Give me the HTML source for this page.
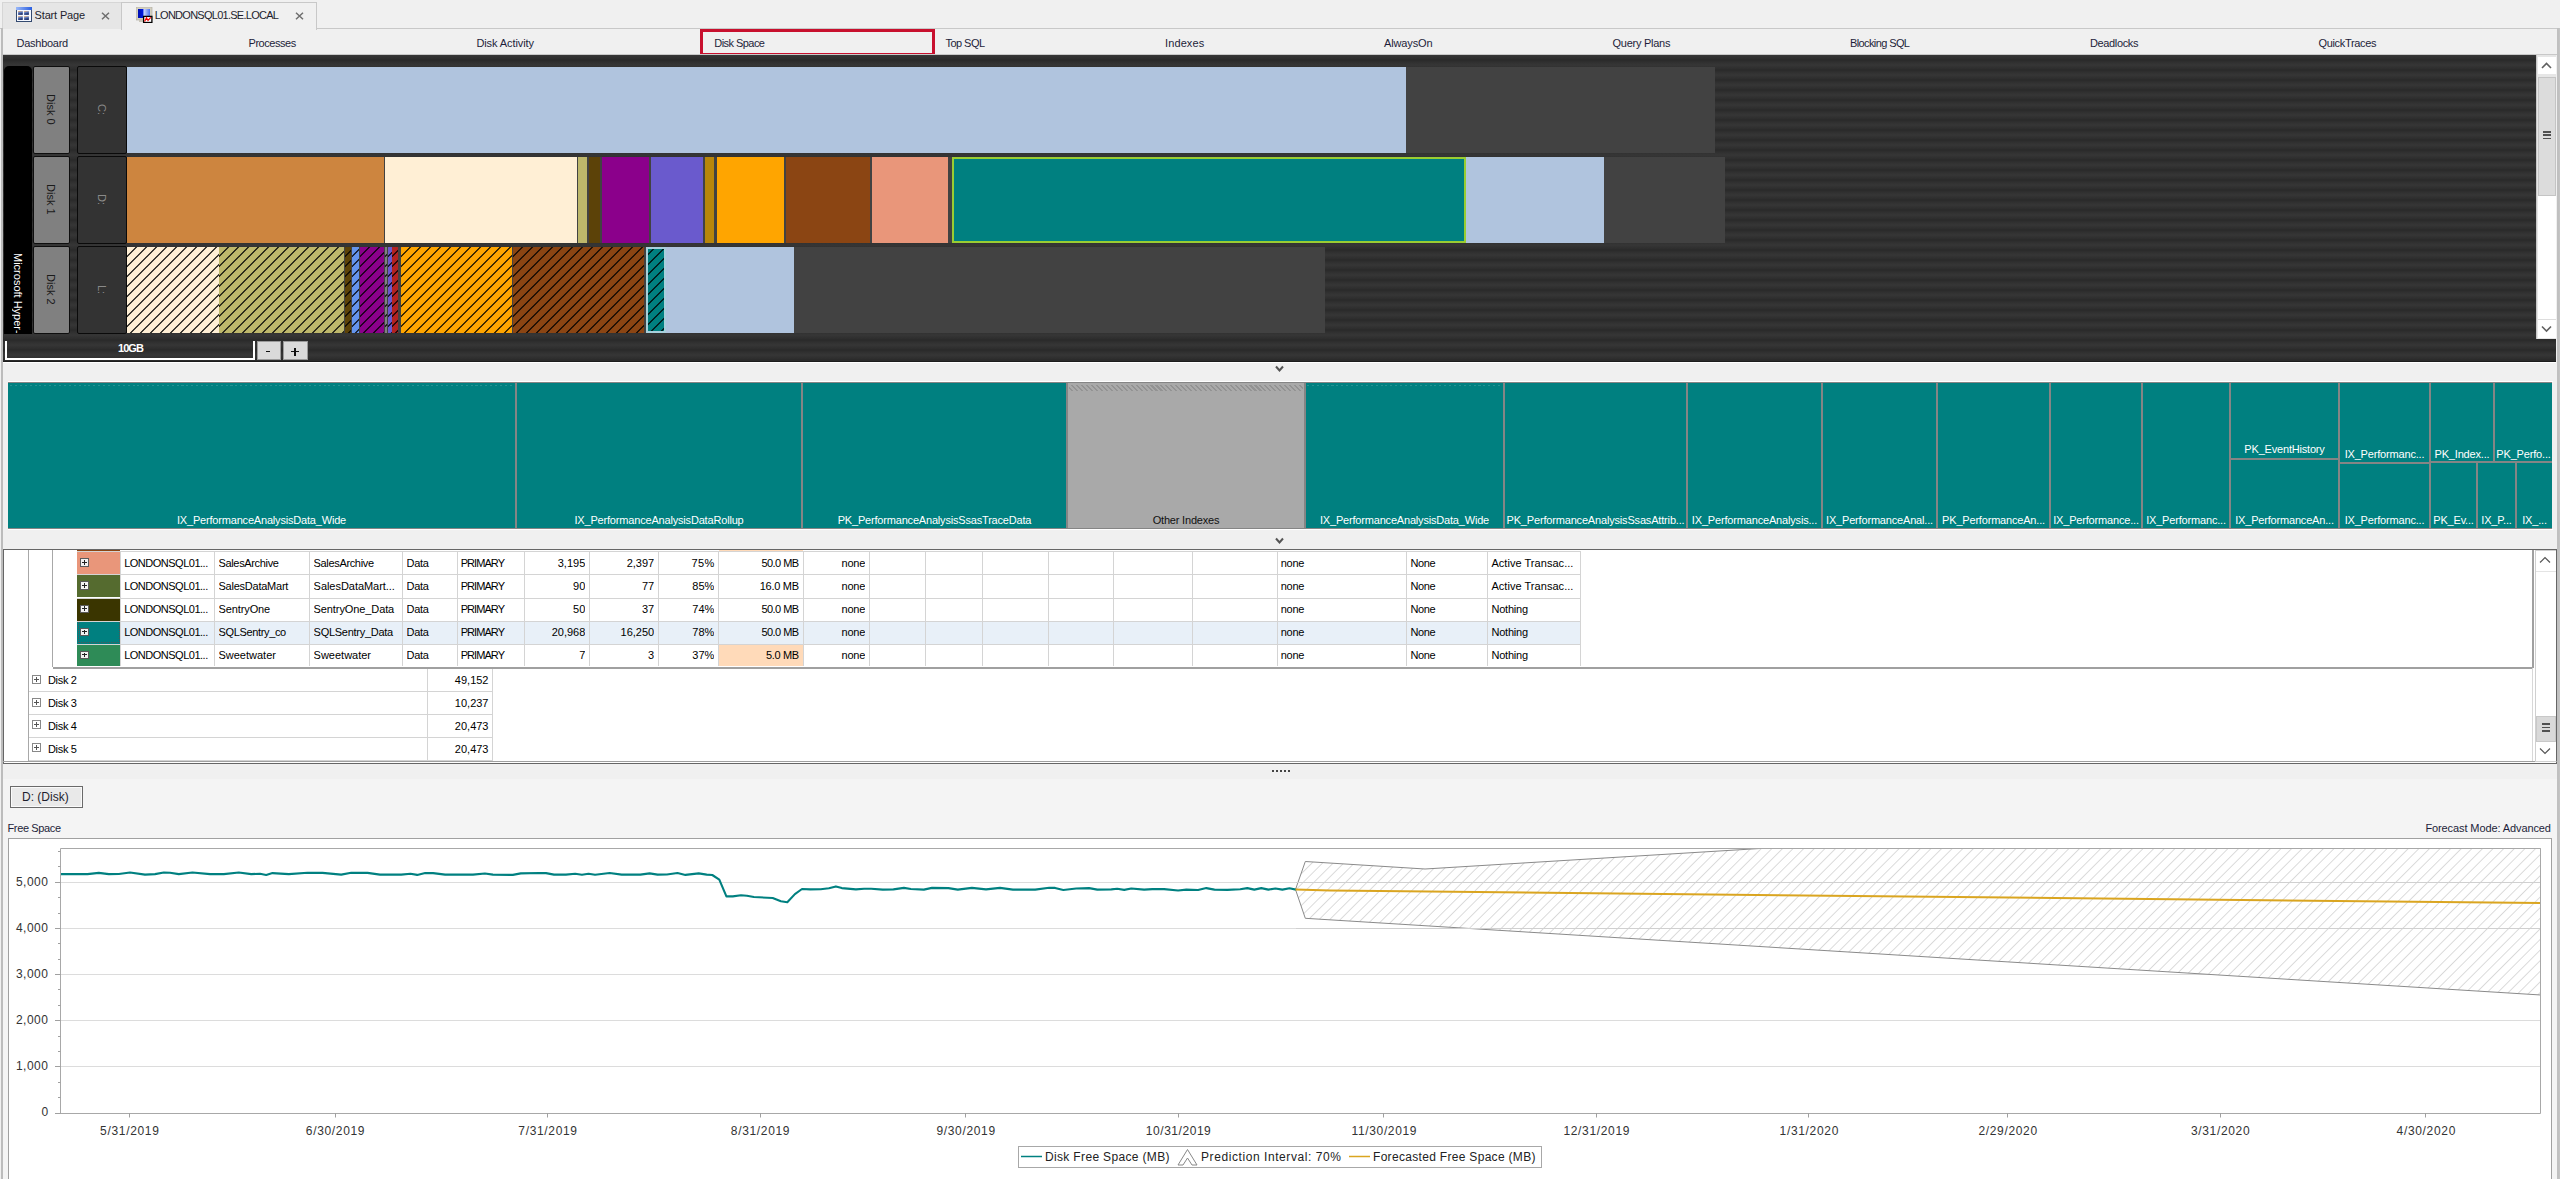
<!DOCTYPE html><html><head><meta charset="utf-8"><style>
html,body{margin:0;padding:0}
body{width:2560px;height:1179px;overflow:hidden;position:relative;background:#f0f0f0;font-family:"Liberation Sans",sans-serif;font-size:11px;color:#1e1e2e}
div{position:absolute;box-sizing:border-box}
.t{white-space:nowrap;line-height:13px}
.vr{writing-mode:vertical-rl;white-space:nowrap;line-height:12px}
.tl{color:#fff;white-space:nowrap;line-height:13px;text-align:center}
.c{white-space:nowrap;line-height:23px;height:23px;overflow:hidden;color:#000}
</style></head><body>
<div style="left:0px;top:28px;width:2560px;height:1px;background:#c8c8c8"></div>
<div style="left:2px;top:2px;width:120px;height:26.5px;background:#e6e6e6;border:1px solid #d6d6d6;border-bottom:none"></div>
<svg style="position:absolute;left:16px;top:7px" width="16" height="15" viewBox="0 0 16 15"><defs><linearGradient id="tb" x1="0" x2="1"><stop offset="0" stop-color="#9ab8f8"/><stop offset="1" stop-color="#2a5ee0"/></linearGradient><linearGradient id="tile" x1="0" y1="0" x2="0.3" y2="1"><stop offset="0" stop-color="#f6a050"/><stop offset="0.45" stop-color="#5c7cc0"/><stop offset="1" stop-color="#102060"/></linearGradient></defs>
<rect x="0" y="0" width="16" height="15" fill="#344a70"/><rect x="0" y="0" width="16" height="3" fill="url(#tb)"/><rect x="1" y="3" width="14" height="11" fill="#f4f8ff"/>
<rect x="2.1" y="4.1" width="4.7" height="3.7" fill="url(#tile)"/><rect x="8.1" y="4.1" width="4.8" height="3.7" fill="url(#tile)"/><rect x="2.1" y="9.2" width="4.7" height="3.7" fill="url(#tile)"/><rect x="8.1" y="9.2" width="4.8" height="3.7" fill="url(#tile)"/></svg>
<div class="t" style="left:34.6px;top:8.7px;font-size:11px;letter-spacing:-0.164px;">Start Page</div>
<svg style="position:absolute;left:101px;top:12px" width="9" height="8"><path d="M1,0.8 L8,7.2 M8,0.8 L1,7.2" stroke="#6e6e6e" stroke-width="1.5"/></svg>
<div style="left:121px;top:2px;width:196px;height:27.5px;background:#f0f0f0;border:1px solid #c8c8c8;border-bottom:none"></div>
<svg style="position:absolute;left:136px;top:7px" width="17" height="16" viewBox="0 0 17 16"><defs><linearGradient id="scr" x1="0" x2="1"><stop offset="0" stop-color="#0010b0"/><stop offset="0.4" stop-color="#0018e0"/><stop offset="0.5" stop-color="#c8d4ff"/><stop offset="1" stop-color="#4a70f0"/></linearGradient></defs>
<rect x="0" y="0" width="16" height="13" fill="#d4d0c0" stroke="#a8a49a" stroke-width="0.6"/><rect x="2" y="2" width="12" height="9" fill="url(#scr)"/><rect x="3" y="13" width="5" height="2" fill="#c8c4b8"/>
<rect x="7.6" y="9.4" width="8.3" height="6.1" fill="#fff" stroke="#000" stroke-width="1.3"/><polyline points="8.6,14.6 10.5,10.8 12,13.5 14.8,10.4" fill="none" stroke="#f00" stroke-width="1.2"/></svg>
<div class="t" style="left:154.7px;top:8.7px;font-size:11px;letter-spacing:-0.735px;">LONDONSQL01.SE.LOCAL</div>
<svg style="position:absolute;left:295px;top:12px" width="9" height="8"><path d="M1,0.8 L8,7.2 M8,0.8 L1,7.2" stroke="#6e6e6e" stroke-width="1.5"/></svg>
<div style="left:1px;top:28px;width:2558.5px;height:1151px;border-left:1.8px solid #bcbcbc;border-right:1.5px solid #c4c4c4;background:transparent"></div>
<div class="t" style="left:16.60px;top:36.7px;font-size:11px;color:#1e1e3a;letter-spacing:-0.274px;">Dashboard</div>
<div class="t" style="left:248.50px;top:36.7px;font-size:11px;color:#1e1e3a;letter-spacing:-0.446px;">Processes</div>
<div class="t" style="left:476.40px;top:36.7px;font-size:11px;color:#1e1e3a;letter-spacing:-0.090px;">Disk Activity</div>
<div class="t" style="left:714.25px;top:36.7px;font-size:11px;color:#1e1e3a;letter-spacing:-0.546px;">Disk Space</div>
<div class="t" style="left:945.50px;top:36.7px;font-size:11px;color:#1e1e3a;letter-spacing:-0.548px;">Top SQL</div>
<div class="t" style="left:1165.00px;top:36.7px;font-size:11px;color:#1e1e3a;letter-spacing:0.116px;">Indexes</div>
<div class="t" style="left:1384.00px;top:36.7px;font-size:11px;color:#1e1e3a;letter-spacing:-0.143px;">AlwaysOn</div>
<div class="t" style="left:1612.50px;top:36.7px;font-size:11px;color:#1e1e3a;letter-spacing:-0.255px;">Query Plans</div>
<div class="t" style="left:1850.00px;top:36.7px;font-size:11px;color:#1e1e3a;letter-spacing:-0.605px;">Blocking SQL</div>
<div class="t" style="left:2090.00px;top:36.7px;font-size:11px;color:#1e1e3a;letter-spacing:-0.359px;">Deadlocks</div>
<div class="t" style="left:2318.50px;top:36.7px;font-size:11px;color:#1e1e3a;letter-spacing:-0.333px;">QuickTraces</div>
<div style="left:700px;top:29px;width:235px;height:27px;border:3px solid #c8102e"></div>
<div style="left:3px;top:54px;width:2555px;height:1px;background:#c8c8c8"></div>
<div style="left:3px;top:55px;width:2553px;height:307px;background:repeating-linear-gradient(180deg,#363636 0px,#2d2d2d 4px,#292929 5px,#2d2d2d 6px,#363636 10px);border-bottom:1px solid #1c1c1c"></div>
<div style="left:4px;top:66px;width:28px;height:268px;background:#000;border-radius:5px 5px 0 0"></div>
<div class="vr" style="left:11.5px;top:253px;height:80px;overflow:hidden;color:#fff;font-size:11px">Microsoft Hyper-V</div>
<div style="left:33px;top:66px;width:37px;height:87.5px;background:#808080;border:1.3px solid #0e0e0e;border-radius:2px"></div>
<div class="vr" style="left:44px;top:66px;width:14px;height:87px;display:flex;align-items:center;justify-content:center;color:#1a1a1a;font-size:11px">Disk 0</div>
<div style="left:77px;top:66px;width:50px;height:87.5px;background:#333;border:1.3px solid #0a0a0a;border-radius:2px"></div>
<div class="vr" style="left:95px;top:66px;width:14px;height:87px;display:flex;align-items:center;justify-content:center;color:#8a8a8a;font-size:11px">C:</div>
<div style="left:33px;top:156px;width:37px;height:87.5px;background:#808080;border:1.3px solid #0e0e0e;border-radius:2px"></div>
<div class="vr" style="left:44px;top:156px;width:14px;height:87px;display:flex;align-items:center;justify-content:center;color:#1a1a1a;font-size:11px">Disk 1</div>
<div style="left:77px;top:156px;width:50px;height:87.5px;background:#333;border:1.3px solid #0a0a0a;border-radius:2px"></div>
<div class="vr" style="left:95px;top:156px;width:14px;height:87px;display:flex;align-items:center;justify-content:center;color:#8a8a8a;font-size:11px">D:</div>
<div style="left:33px;top:246px;width:37px;height:87.5px;background:#808080;border:1.3px solid #0e0e0e;border-radius:2px"></div>
<div class="vr" style="left:44px;top:246px;width:14px;height:87px;display:flex;align-items:center;justify-content:center;color:#1a1a1a;font-size:11px">Disk 2</div>
<div style="left:77px;top:246px;width:50px;height:87.5px;background:#333;border:1.3px solid #0a0a0a;border-radius:2px"></div>
<div class="vr" style="left:95px;top:246px;width:14px;height:87px;display:flex;align-items:center;justify-content:center;color:#8a8a8a;font-size:11px">L:</div>
<div style="left:127px;top:67px;width:1588px;height:86px;background:#424242"></div>
<div style="left:127px;top:157px;width:1598px;height:86px;background:#424242"></div>
<div style="left:127px;top:247px;width:1197.5px;height:86px;background:#424242"></div>
<div style="left:127px;top:67px;width:1279px;height:86px;background:#b0c4de;"></div>
<div style="left:1406px;top:67px;width:309px;height:86px;background:#424242;"></div>
<div style="left:127px;top:157px;width:257px;height:86px;background:#cd853f;"></div>
<div style="left:385px;top:157px;width:192px;height:86px;background:#ffefd5;"></div>
<div style="left:578px;top:157px;width:9px;height:86px;background:#bdb76b;"></div>
<div style="left:589px;top:157px;width:11px;height:86px;background:#5c4208;"></div>
<div style="left:602px;top:157px;width:47px;height:86px;background:#8b008b;"></div>
<div style="left:651px;top:157px;width:52px;height:86px;background:#6a5acd;"></div>
<div style="left:705px;top:157px;width:9px;height:86px;background:#b8860b;"></div>
<div style="left:717px;top:157px;width:67px;height:86px;background:#ffa500;"></div>
<div style="left:786px;top:157px;width:84px;height:86px;background:#8b4513;"></div>
<div style="left:872px;top:157px;width:76px;height:86px;background:#e9967a;"></div>
<div style="left:952px;top:157px;width:514px;height:86px;background:#008080;border:2px solid #9acd32;"></div>
<div style="left:1466px;top:157px;width:138px;height:86px;background:#b0c4de;"></div>
<div style="left:1604px;top:157px;width:121px;height:86px;background:#424242;"></div>
<div style="left:127px;top:247px;width:92px;height:86px;background:#ffefd5;"></div>
<div style="left:219px;top:247px;width:125px;height:86px;background:#bdb76b;"></div>
<div style="left:345px;top:247px;width:6px;height:86px;background:#5c4208;"></div>
<div style="left:352px;top:247px;width:7px;height:86px;background:#6495ed;"></div>
<div style="left:360px;top:247px;width:24px;height:86px;background:#8b008b;"></div>
<div style="left:385px;top:247px;width:2px;height:86px;background:#808080;"></div>
<div style="left:388px;top:247px;width:4px;height:86px;background:#6a5acd;"></div>
<div style="left:392px;top:247px;width:6px;height:86px;background:#b22222;"></div>
<div style="left:401px;top:247px;width:111px;height:86px;background:#ffa500;"></div>
<div style="left:513px;top:247px;width:131px;height:86px;background:#8b4513;"></div>
<div style="left:646px;top:247px;width:20px;height:86px;background:#008080;border:2px solid #a8d0dc;"></div>
<div style="left:666px;top:247px;width:128px;height:86px;background:#b0c4de;"></div>
<div style="left:794px;top:247px;width:531px;height:86px;background:#424242;"></div>
<svg style="position:absolute;left:0;top:0" width="2560" height="400"><defs><pattern id="hp0" patternUnits="userSpaceOnUse" width="10" height="10" patternTransform="translate(127,247)"><path d="M-1,10.5 L10.5,-1 M8.5,11 L11,8.5 M-1,0.5 L0.5,-1" stroke="#000" stroke-width="1.15"/></pattern><pattern id="hp2" patternUnits="userSpaceOnUse" width="10" height="10" patternTransform="translate(219,247)"><path d="M-1,10.5 L10.5,-1 M8.5,11 L11,8.5 M-1,0.5 L0.5,-1" stroke="#000" stroke-width="1.15"/></pattern><pattern id="hp4" patternUnits="userSpaceOnUse" width="10" height="10" patternTransform="translate(345,247)"><path d="M-1,10.5 L10.5,-1 M8.5,11 L11,8.5 M-1,0.5 L0.5,-1" stroke="#000" stroke-width="1.15"/></pattern><pattern id="hp6" patternUnits="userSpaceOnUse" width="10" height="10" patternTransform="translate(352,247)"><path d="M-1,10.5 L10.5,-1 M8.5,11 L11,8.5 M-1,0.5 L0.5,-1" stroke="#000" stroke-width="1.15"/></pattern><pattern id="hp8" patternUnits="userSpaceOnUse" width="10" height="10" patternTransform="translate(360,247)"><path d="M-1,10.5 L10.5,-1 M8.5,11 L11,8.5 M-1,0.5 L0.5,-1" stroke="#000" stroke-width="1.15"/></pattern><pattern id="hp10" patternUnits="userSpaceOnUse" width="10" height="10" patternTransform="translate(385,247)"><path d="M-1,10.5 L10.5,-1 M8.5,11 L11,8.5 M-1,0.5 L0.5,-1" stroke="#000" stroke-width="1.15"/></pattern><pattern id="hp12" patternUnits="userSpaceOnUse" width="10" height="10" patternTransform="translate(388,247)"><path d="M-1,10.5 L10.5,-1 M8.5,11 L11,8.5 M-1,0.5 L0.5,-1" stroke="#000" stroke-width="1.15"/></pattern><pattern id="hp14" patternUnits="userSpaceOnUse" width="10" height="10" patternTransform="translate(392,247)"><path d="M-1,10.5 L10.5,-1 M8.5,11 L11,8.5 M-1,0.5 L0.5,-1" stroke="#000" stroke-width="1.15"/></pattern><pattern id="hp16" patternUnits="userSpaceOnUse" width="10" height="10" patternTransform="translate(401,247)"><path d="M-1,10.5 L10.5,-1 M8.5,11 L11,8.5 M-1,0.5 L0.5,-1" stroke="#000" stroke-width="1.15"/></pattern><pattern id="hp18" patternUnits="userSpaceOnUse" width="10" height="10" patternTransform="translate(513,247)"><path d="M-1,10.5 L10.5,-1 M8.5,11 L11,8.5 M-1,0.5 L0.5,-1" stroke="#000" stroke-width="1.15"/></pattern><pattern id="hp20" patternUnits="userSpaceOnUse" width="10" height="10" patternTransform="translate(646,247)"><path d="M-1,10.5 L10.5,-1 M8.5,11 L11,8.5 M-1,0.5 L0.5,-1" stroke="#000" stroke-width="1.15"/></pattern></defs><rect x="127" y="247" width="92" height="86" fill="url(#hp0)"/><rect x="219" y="247" width="125" height="86" fill="url(#hp2)"/><rect x="345" y="247" width="6" height="86" fill="url(#hp4)"/><rect x="352" y="247" width="7" height="86" fill="url(#hp6)"/><rect x="360" y="247" width="24" height="86" fill="url(#hp8)"/><rect x="385" y="247" width="2" height="86" fill="url(#hp10)"/><rect x="388" y="247" width="4" height="86" fill="url(#hp12)"/><rect x="392" y="247" width="6" height="86" fill="url(#hp14)"/><rect x="401" y="247" width="111" height="86" fill="url(#hp16)"/><rect x="513" y="247" width="131" height="86" fill="url(#hp18)"/><rect x="648" y="249" width="16" height="82" fill="url(#hp20)"/></svg>
<div style="left:5px;top:341px;width:250px;height:19px;border:2.5px solid #fff;border-top:none"></div>
<div class="t" style="left:118.0px;top:342px;color:#fff;font-size:11px;font-weight:bold;letter-spacing:-0.970px;">10GB</div>
<div style="left:256.5px;top:341px;width:24.5px;height:18.5px;background:#dadada;border:1px solid #9a9a9a"></div>
<div style="left:265.5px;top:351px;width:4px;height:1.2px;background:#111"></div>
<div style="left:283px;top:341px;width:24.5px;height:18.5px;background:#dadada;border:1px solid #9a9a9a"></div>
<div style="left:291px;top:351px;width:8px;height:1.2px;background:#111"></div>
<div style="left:294.4px;top:347.5px;width:1.2px;height:8px;background:#111"></div>
<div style="left:2536px;top:55px;width:20px;height:284px;background:#e6e6e6;border-left:1px solid #c8c8c8"></div>
<div style="left:2537.5px;top:57px;width:18px;height:17px;background:#fff"></div>
<svg style="position:absolute;left:2541px;top:62px" width="11" height="8"><polyline points="1,6 5.5,1.5 10,6" fill="none" stroke="#606060" stroke-width="1.6"/></svg>
<div style="left:2538px;top:76.5px;width:18px;height:119px;background:#dcdcdc;border:1px solid #c4c4c4"></div>
<div style="left:2543px;top:131.2px;width:8px;height:1.6px;background:#505050"></div>
<div style="left:2543px;top:134.4px;width:8px;height:1.6px;background:#505050"></div>
<div style="left:2543px;top:137.6px;width:8px;height:1.6px;background:#505050"></div>
<div style="left:2537.5px;top:195.5px;width:18px;height:123px;background:#fff"></div>
<div style="left:2537.5px;top:319px;width:18px;height:19px;background:#fff;border-top:1px solid #ddd"></div>
<svg style="position:absolute;left:2541px;top:325px" width="11" height="8"><polyline points="1,1.5 5.5,6 10,1.5" fill="none" stroke="#606060" stroke-width="1.6"/></svg>
<div style="left:3px;top:362px;width:2553px;height:1px;background:#fff"></div>
<svg style="position:absolute;left:1275px;top:365px" width="9" height="8"><polyline points="1,1.5 4.5,5.5 8,1.5" fill="none" stroke="#555" stroke-width="2"/></svg>
<div style="left:8px;top:381px;width:2545px;height:1px;background:#fff"></div>
<div style="left:8px;top:382px;width:2544px;height:147px;background:#858585"></div>
<div style="left:8px;top:383px;width:507px;height:145px;background:#008080;"></div>
<div class="tl" style="left:8px;top:513.8px;width:507px;color:#fff;overflow:hidden;letter-spacing:-0.187px;">IX_PerformanceAnalysisData_Wide</div>
<div style="left:517px;top:383px;width:284px;height:145px;background:#008080;"></div>
<div class="tl" style="left:517px;top:513.8px;width:284px;color:#fff;overflow:hidden;letter-spacing:-0.180px;">IX_PerformanceAnalysisDataRollup</div>
<div style="left:803px;top:383px;width:263px;height:145px;background:#008080;"></div>
<div class="tl" style="left:803px;top:513.8px;width:263px;color:#fff;overflow:hidden;letter-spacing:-0.188px;">PK_PerformanceAnalysisSsasTraceData</div>
<div style="left:1068px;top:383px;width:236px;height:145px;background:#a9a9a9;"></div>
<div class="tl" style="left:1068px;top:513.8px;width:236px;color:#111;overflow:hidden;letter-spacing:-0.184px;">Other Indexes</div>
<div style="left:1069px;top:384.5px;width:234px;height:6px;background:repeating-linear-gradient(45deg,#a9a9a9 0px,#a9a9a9 2px,#939393 2px,#939393 3.5px)"></div>
<div style="left:1306px;top:383px;width:197px;height:145px;background:#008080;"></div>
<div class="tl" style="left:1306px;top:513.8px;width:197px;color:#fff;overflow:hidden;letter-spacing:-0.187px;">IX_PerformanceAnalysisData_Wide</div>
<div style="left:1505px;top:383px;width:181px;height:145px;background:#008080;"></div>
<div class="tl" style="left:1505px;top:513.8px;width:181px;color:#fff;overflow:hidden;letter-spacing:-0.173px;">PK_PerformanceAnalysisSsasAttrib...</div>
<div style="left:1688px;top:383px;width:133px;height:145px;background:#008080;"></div>
<div class="tl" style="left:1688px;top:513.8px;width:133px;color:#fff;overflow:hidden;letter-spacing:-0.173px;">IX_PerformanceAnalysis...</div>
<div style="left:1823px;top:383px;width:113px;height:145px;background:#008080;"></div>
<div class="tl" style="left:1823px;top:513.8px;width:113px;color:#fff;overflow:hidden;letter-spacing:-0.177px;">IX_PerformanceAnal...</div>
<div style="left:1938px;top:383px;width:111px;height:145px;background:#008080;"></div>
<div class="tl" style="left:1938px;top:513.8px;width:111px;color:#fff;overflow:hidden;letter-spacing:-0.189px;">PK_PerformanceAn...</div>
<div style="left:2051px;top:383px;width:90px;height:145px;background:#008080;"></div>
<div class="tl" style="left:2051px;top:513.8px;width:90px;color:#fff;overflow:hidden;letter-spacing:-0.177px;">IX_Performance...</div>
<div style="left:2143px;top:383px;width:86px;height:145px;background:#008080;"></div>
<div class="tl" style="left:2143px;top:513.8px;width:86px;color:#fff;overflow:hidden;letter-spacing:-0.176px;">IX_Performanc...</div>
<div style="left:2231px;top:383px;width:107px;height:75px;background:#008080;"></div>
<div class="tl" style="left:2231px;top:442.8px;width:107px;color:#fff;overflow:hidden;letter-spacing:-0.190px;">PK_EventHistory</div>
<div style="left:2231px;top:460px;width:107px;height:68px;background:#008080;"></div>
<div class="tl" style="left:2231px;top:513.8px;width:107px;color:#fff;overflow:hidden;letter-spacing:-0.182px;">IX_PerformanceAn...</div>
<div style="left:2340px;top:383px;width:89px;height:79px;background:#008080;"></div>
<div class="tl" style="left:2340px;top:447.8px;width:89px;color:#fff;overflow:hidden;letter-spacing:-0.176px;">IX_Performanc...</div>
<div style="left:2340px;top:464px;width:89px;height:64px;background:#008080;"></div>
<div class="tl" style="left:2340px;top:513.8px;width:89px;color:#fff;overflow:hidden;letter-spacing:-0.176px;">IX_Performanc...</div>
<div style="left:2431px;top:383px;width:62px;height:78px;background:#008080;"></div>
<div class="tl" style="left:2431px;top:447.8px;width:62px;color:#fff;overflow:hidden;letter-spacing:-0.182px;">PK_Index...</div>
<div style="left:2495px;top:383px;width:57px;height:78px;background:#008080;"></div>
<div class="tl" style="left:2495px;top:447.8px;width:57px;color:#fff;overflow:hidden;letter-spacing:-0.180px;">PK_Perfo...</div>
<div style="left:2431px;top:463px;width:45px;height:65px;background:#008080;"></div>
<div class="tl" style="left:2431px;top:513.8px;width:45px;color:#fff;overflow:hidden;letter-spacing:-0.192px;">PK_Ev...</div>
<div style="left:2478px;top:463px;width:37px;height:65px;background:#008080;"></div>
<div class="tl" style="left:2478px;top:513.8px;width:37px;color:#fff;overflow:hidden;letter-spacing:-0.169px;">IX_P...</div>
<div style="left:2517px;top:463px;width:35px;height:65px;background:#008080;"></div>
<div class="tl" style="left:2517px;top:513.8px;width:35px;color:#fff;overflow:hidden;letter-spacing:-0.164px;">IX_...</div>
<div style="left:10px;top:385px;width:504px;height:1px;background:repeating-linear-gradient(90deg,rgba(255,255,255,.14) 0 2px,transparent 2px 4.9px)"></div>
<div style="left:1307px;top:385px;width:195px;height:1px;background:repeating-linear-gradient(90deg,rgba(255,255,255,.14) 0 2px,transparent 2px 4.9px)"></div>
<div style="left:8px;top:529px;width:2545px;height:1px;background:#fff"></div>
<svg style="position:absolute;left:1275px;top:537px" width="9" height="8"><polyline points="1,1.5 4.5,5.5 8,1.5" fill="none" stroke="#555" stroke-width="2"/></svg>
<div style="left:3px;top:548.5px;width:2554px;height:215px;background:#fff;border:1.4px solid #666;border-bottom:none"></div>
<div style="left:3px;top:761px;width:2554px;height:1px;background:#a0a0a0"></div>
<div style="left:3px;top:763px;width:2554px;height:1px;background:#666"></div>
<div style="left:28px;top:550px;width:1px;height:211px;background:#a8a8a8"></div>
<div style="left:52px;top:550px;width:1px;height:117px;background:#a8a8a8"></div>
<div style="left:76.8px;top:550.2px;width:43.2px;height:1px;background:#8b4513"></div>
<div style="left:718.5px;top:550.2px;width:84px;height:1px;background:#ffdab9"></div>
<div style="left:76.8px;top:551.3px;width:43.2px;height:23.0px;background:#e9967a"></div>
<div style="left:80.3px;top:558.3px;width:8.7px;height:8.5px;border:1px solid #5a5a5a;background:#f2f2f2"></div>
<div style="left:82.3px;top:562.0999999999999px;width:4.7px;height:1px;background:#222"></div>
<div style="left:84.2px;top:560.1999999999999px;width:1px;height:4.7px;background:#222"></div>
<div class="c" style="left:124.20px;top:551.9px;width:90.3px;letter-spacing:-0.498px;">LONDONSQL01...</div>
<div class="c" style="left:218.50px;top:551.9px;width:91.1px;letter-spacing:-0.344px;">SalesArchive</div>
<div class="c" style="left:313.60px;top:551.9px;width:88.9px;letter-spacing:-0.344px;">SalesArchive</div>
<div class="c" style="left:406.50px;top:551.9px;width:50.2px;letter-spacing:-0.255px;">Data</div>
<div class="c" style="left:460.70px;top:551.9px;width:63.0px;letter-spacing:-0.940px;">PRIMARY</div>
<div class="c" style="left:523.5px;top:551.9px;width:61.81px;text-align:right;letter-spacing:0.011px;">3,195</div>
<div class="c" style="left:588.7px;top:551.9px;width:65.49px;text-align:right;letter-spacing:-0.007px;">2,397</div>
<div class="c" style="left:657.6px;top:551.9px;width:57.25px;text-align:right;letter-spacing:0.450px;">75%</div>
<div class="c" style="left:717.8px;top:551.9px;width:80.75px;text-align:right;letter-spacing:-0.546px;">50.0 MB</div>
<div class="c" style="left:802.5px;top:551.9px;width:62.58px;text-align:right;letter-spacing:-0.225px;">none</div>
<div class="c" style="left:1280.70px;top:551.9px;width:125.7px;letter-spacing:-0.225px;">none</div>
<div class="c" style="left:1410.40px;top:551.9px;width:77.0px;letter-spacing:-0.354px;">None</div>
<div class="c" style="left:1491.40px;top:551.9px;width:88.8px;letter-spacing:0.044px;">Active Transac...</div>
<div style="left:76.8px;top:574.3px;width:43.2px;height:23.2px;background:#556b2f"></div>
<div style="left:80.3px;top:581.3px;width:8.7px;height:8.5px;border:1px solid #5a5a5a;background:#f2f2f2"></div>
<div style="left:82.3px;top:585.0999999999999px;width:4.7px;height:1px;background:#222"></div>
<div style="left:84.2px;top:583.1999999999999px;width:1px;height:4.7px;background:#222"></div>
<div class="c" style="left:124.20px;top:574.9px;width:90.3px;letter-spacing:-0.498px;">LONDONSQL01...</div>
<div class="c" style="left:218.50px;top:574.9px;width:91.1px;letter-spacing:-0.239px;">SalesDataMart</div>
<div class="c" style="left:313.60px;top:574.9px;width:88.9px;letter-spacing:-0.040px;">SalesDataMart...</div>
<div class="c" style="left:406.50px;top:574.9px;width:50.2px;letter-spacing:-0.255px;">Data</div>
<div class="c" style="left:460.70px;top:574.9px;width:63.0px;letter-spacing:-0.940px;">PRIMARY</div>
<div class="c" style="left:523.5px;top:574.9px;width:61.83px;text-align:right;letter-spacing:0.026px;">90</div>
<div class="c" style="left:588.7px;top:574.9px;width:65.53px;text-align:right;letter-spacing:0.026px;">77</div>
<div class="c" style="left:657.6px;top:574.9px;width:56.81px;text-align:right;letter-spacing:0.008px;">85%</div>
<div class="c" style="left:717.8px;top:574.9px;width:81.02px;text-align:right;letter-spacing:-0.276px;">16.0 MB</div>
<div class="c" style="left:802.5px;top:574.9px;width:62.58px;text-align:right;letter-spacing:-0.225px;">none</div>
<div class="c" style="left:1280.70px;top:574.9px;width:125.7px;letter-spacing:-0.225px;">none</div>
<div class="c" style="left:1410.40px;top:574.9px;width:77.0px;letter-spacing:-0.354px;">None</div>
<div class="c" style="left:1491.40px;top:574.9px;width:88.8px;letter-spacing:0.044px;">Active Transac...</div>
<div style="left:76.8px;top:597.5px;width:43.2px;height:23.1px;background:#3a3500"></div>
<div style="left:80.3px;top:604.5px;width:8.7px;height:8.5px;border:1px solid #5a5a5a;background:#f2f2f2"></div>
<div style="left:82.3px;top:608.3px;width:4.7px;height:1px;background:#222"></div>
<div style="left:84.2px;top:606.4px;width:1px;height:4.7px;background:#222"></div>
<div class="c" style="left:124.20px;top:598.1px;width:90.3px;letter-spacing:-0.498px;">LONDONSQL01...</div>
<div class="c" style="left:218.50px;top:598.1px;width:91.1px;letter-spacing:-0.110px;">SentryOne</div>
<div class="c" style="left:313.60px;top:598.1px;width:88.9px;letter-spacing:-0.100px;">SentryOne_Data</div>
<div class="c" style="left:406.50px;top:598.1px;width:50.2px;letter-spacing:-0.255px;">Data</div>
<div class="c" style="left:460.70px;top:598.1px;width:63.0px;letter-spacing:-0.940px;">PRIMARY</div>
<div class="c" style="left:523.5px;top:598.1px;width:61.83px;text-align:right;letter-spacing:0.026px;">50</div>
<div class="c" style="left:588.7px;top:598.1px;width:65.53px;text-align:right;letter-spacing:0.026px;">37</div>
<div class="c" style="left:657.6px;top:598.1px;width:56.81px;text-align:right;letter-spacing:0.008px;">74%</div>
<div class="c" style="left:717.8px;top:598.1px;width:80.75px;text-align:right;letter-spacing:-0.546px;">50.0 MB</div>
<div class="c" style="left:802.5px;top:598.1px;width:62.58px;text-align:right;letter-spacing:-0.225px;">none</div>
<div class="c" style="left:1280.70px;top:598.1px;width:125.7px;letter-spacing:-0.225px;">none</div>
<div class="c" style="left:1410.40px;top:598.1px;width:77.0px;letter-spacing:-0.354px;">None</div>
<div class="c" style="left:1491.40px;top:598.1px;width:88.8px;letter-spacing:-0.204px;">Nothing</div>
<div style="left:120px;top:620.6px;width:1460px;height:23.0px;background:#e8f0f8"></div>
<div style="left:76.8px;top:620.6px;width:43.2px;height:23.0px;background:#008080"></div>
<div style="left:77.5px;top:621.1px;width:42px;height:22.0px;border:1px dotted #555"></div>
<div style="left:80.3px;top:627.6px;width:8.7px;height:8.5px;border:1px solid #5a5a5a;background:#f2f2f2"></div>
<div style="left:82.3px;top:631.4px;width:4.7px;height:1px;background:#222"></div>
<div style="left:84.2px;top:629.5px;width:1px;height:4.7px;background:#222"></div>
<div class="c" style="left:124.20px;top:621.2px;width:90.3px;letter-spacing:-0.498px;">LONDONSQL01...</div>
<div class="c" style="left:218.50px;top:621.2px;width:91.1px;letter-spacing:-0.350px;">SQLSentry_co</div>
<div class="c" style="left:313.60px;top:621.2px;width:88.9px;letter-spacing:-0.278px;">SQLSentry_Data</div>
<div class="c" style="left:406.50px;top:621.2px;width:50.2px;letter-spacing:-0.255px;">Data</div>
<div class="c" style="left:460.70px;top:621.2px;width:63.0px;letter-spacing:-0.940px;">PRIMARY</div>
<div class="c" style="left:523.5px;top:621.2px;width:61.8px;text-align:right;letter-spacing:-0.003px;">20,968</div>
<div class="c" style="left:588.7px;top:621.2px;width:65.5px;text-align:right;letter-spacing:-0.003px;">16,250</div>
<div class="c" style="left:657.6px;top:621.2px;width:56.81px;text-align:right;letter-spacing:0.008px;">78%</div>
<div class="c" style="left:717.8px;top:621.2px;width:80.75px;text-align:right;letter-spacing:-0.546px;">50.0 MB</div>
<div class="c" style="left:802.5px;top:621.2px;width:62.58px;text-align:right;letter-spacing:-0.225px;">none</div>
<div class="c" style="left:1280.70px;top:621.2px;width:125.7px;letter-spacing:-0.225px;">none</div>
<div class="c" style="left:1410.40px;top:621.2px;width:77.0px;letter-spacing:-0.354px;">None</div>
<div class="c" style="left:1491.40px;top:621.2px;width:88.8px;letter-spacing:-0.204px;">Nothing</div>
<div style="left:718.5px;top:643.6px;width:84px;height:22.7px;background:#ffdab9"></div>
<div style="left:76.8px;top:643.6px;width:43.2px;height:22.7px;background:#2e8b57"></div>
<div style="left:80.3px;top:650.6px;width:8.7px;height:8.5px;border:1px solid #5a5a5a;background:#f2f2f2"></div>
<div style="left:82.3px;top:654.4px;width:4.7px;height:1px;background:#222"></div>
<div style="left:84.2px;top:652.5px;width:1px;height:4.7px;background:#222"></div>
<div class="c" style="left:124.20px;top:644.2px;width:90.3px;letter-spacing:-0.498px;">LONDONSQL01...</div>
<div class="c" style="left:218.50px;top:644.2px;width:91.1px;letter-spacing:-0.008px;">Sweetwater</div>
<div class="c" style="left:313.60px;top:644.2px;width:88.9px;letter-spacing:-0.008px;">Sweetwater</div>
<div class="c" style="left:406.50px;top:644.2px;width:50.2px;letter-spacing:-0.255px;">Data</div>
<div class="c" style="left:460.70px;top:644.2px;width:63.0px;letter-spacing:-0.940px;">PRIMARY</div>
<div class="c" style="left:523.5px;top:644.2px;width:61.8px;text-align:right;">7</div>
<div class="c" style="left:588.7px;top:644.2px;width:65.5px;text-align:right;">3</div>
<div class="c" style="left:657.6px;top:644.2px;width:56.81px;text-align:right;letter-spacing:0.008px;">37%</div>
<div class="c" style="left:717.8px;top:644.2px;width:80.97px;text-align:right;letter-spacing:-0.334px;">5.0 MB</div>
<div class="c" style="left:802.5px;top:644.2px;width:62.58px;text-align:right;letter-spacing:-0.225px;">none</div>
<div class="c" style="left:1280.70px;top:644.2px;width:125.7px;letter-spacing:-0.225px;">none</div>
<div class="c" style="left:1410.40px;top:644.2px;width:77.0px;letter-spacing:-0.354px;">None</div>
<div class="c" style="left:1491.40px;top:644.2px;width:88.8px;letter-spacing:-0.204px;">Nothing</div>
<div style="left:76.8px;top:574.3px;width:1503.2px;height:1px;background:#d4d4d4"></div>
<div style="left:76.8px;top:597.5px;width:1503.2px;height:1px;background:#d4d4d4"></div>
<div style="left:76.8px;top:620.6px;width:1503.2px;height:1px;background:#d4d4d4"></div>
<div style="left:76.8px;top:643.6px;width:1503.2px;height:1px;background:#d4d4d4"></div>
<div style="left:76.8px;top:550.5px;width:1503.2px;height:1px;background:#d4d4d4"></div>
<div style="left:120px;top:551px;width:1px;height:115px;background:#d4d4d4"></div>
<div style="left:214.3px;top:551px;width:1px;height:115px;background:#d4d4d4"></div>
<div style="left:309.4px;top:551px;width:1px;height:115px;background:#d4d4d4"></div>
<div style="left:402.3px;top:551px;width:1px;height:115px;background:#d4d4d4"></div>
<div style="left:456.5px;top:551px;width:1px;height:115px;background:#d4d4d4"></div>
<div style="left:523.5px;top:551px;width:1px;height:115px;background:#d4d4d4"></div>
<div style="left:588.7px;top:551px;width:1px;height:115px;background:#d4d4d4"></div>
<div style="left:657.6px;top:551px;width:1px;height:115px;background:#d4d4d4"></div>
<div style="left:717.8px;top:551px;width:1px;height:115px;background:#d4d4d4"></div>
<div style="left:802.5px;top:551px;width:1px;height:115px;background:#d4d4d4"></div>
<div style="left:868.7px;top:551px;width:1px;height:115px;background:#d4d4d4"></div>
<div style="left:925px;top:551px;width:1px;height:115px;background:#d4d4d4"></div>
<div style="left:981.5px;top:551px;width:1px;height:115px;background:#d4d4d4"></div>
<div style="left:1047.5px;top:551px;width:1px;height:115px;background:#d4d4d4"></div>
<div style="left:1113.4px;top:551px;width:1px;height:115px;background:#d4d4d4"></div>
<div style="left:1191.6px;top:551px;width:1px;height:115px;background:#d4d4d4"></div>
<div style="left:1276.5px;top:551px;width:1px;height:115px;background:#d4d4d4"></div>
<div style="left:1406.2px;top:551px;width:1px;height:115px;background:#d4d4d4"></div>
<div style="left:1487.2px;top:551px;width:1px;height:115px;background:#d4d4d4"></div>
<div style="left:1580px;top:551px;width:1px;height:115px;background:#d4d4d4"></div>
<div style="left:52.5px;top:666.5px;width:2480.5px;height:2px;background:#a0a0a0"></div>
<div style="left:2532px;top:550px;width:1.5px;height:118px;background:#a0a0a0"></div>
<div style="left:32px;top:674.5px;width:9px;height:9px;border:1px solid #888;background:#fff"></div>
<div style="left:34px;top:678.5px;width:5px;height:1px;background:#555"></div>
<div style="left:36px;top:676.5px;width:1px;height:5px;background:#555"></div>
<div class="c" style="left:48.00px;top:668.8px;width:200px;letter-spacing:-0.336px;">Disk 2</div>
<div class="c" style="left:427px;top:668.8px;width:61.5px;text-align:right;letter-spacing:-0.003px;">49,152</div>
<div style="left:28.5px;top:691.2px;width:464px;height:1px;background:#d4d4d4"></div>
<div style="left:32px;top:697.7px;width:9px;height:9px;border:1px solid #888;background:#fff"></div>
<div style="left:34px;top:701.7px;width:5px;height:1px;background:#555"></div>
<div style="left:36px;top:699.7px;width:1px;height:5px;background:#555"></div>
<div class="c" style="left:48.00px;top:692.0px;width:200px;letter-spacing:-0.336px;">Disk 3</div>
<div class="c" style="left:427px;top:692.0px;width:61.5px;text-align:right;letter-spacing:-0.003px;">10,237</div>
<div style="left:28.5px;top:713.7px;width:464px;height:1px;background:#d4d4d4"></div>
<div style="left:32px;top:720.2px;width:9px;height:9px;border:1px solid #888;background:#fff"></div>
<div style="left:34px;top:724.2px;width:5px;height:1px;background:#555"></div>
<div style="left:36px;top:722.2px;width:1px;height:5px;background:#555"></div>
<div class="c" style="left:48.00px;top:714.5px;width:200px;letter-spacing:-0.336px;">Disk 4</div>
<div class="c" style="left:427px;top:714.5px;width:61.5px;text-align:right;letter-spacing:-0.003px;">20,473</div>
<div style="left:28.5px;top:736.7px;width:464px;height:1px;background:#d4d4d4"></div>
<div style="left:32px;top:743.2px;width:9px;height:9px;border:1px solid #888;background:#fff"></div>
<div style="left:34px;top:747.2px;width:5px;height:1px;background:#555"></div>
<div style="left:36px;top:745.2px;width:1px;height:5px;background:#555"></div>
<div class="c" style="left:48.00px;top:737.5px;width:200px;letter-spacing:-0.336px;">Disk 5</div>
<div class="c" style="left:427px;top:737.5px;width:61.5px;text-align:right;letter-spacing:-0.003px;">20,473</div>
<div style="left:28.5px;top:759.5px;width:464px;height:1px;background:#d4d4d4"></div>
<div style="left:426.5px;top:668.5px;width:1px;height:92px;background:#d4d4d4"></div>
<div style="left:492px;top:668.5px;width:1px;height:92px;background:#d4d4d4"></div>
<div style="left:2534.5px;top:550px;width:21.5px;height:212px;background:#fff;border:1px solid #d0d0d0;border-right:none"></div>
<div style="left:2532px;top:668px;width:1px;height:93px;background:#d8d8d8"></div>
<div style="left:2535.5px;top:570.5px;width:20px;height:1px;background:#e4e4e4"></div>
<svg style="position:absolute;left:2539px;top:556px" width="12" height="8"><polyline points="1,6.5 6,1.5 11,6.5" fill="none" stroke="#555" stroke-width="1.2"/></svg>
<div style="left:2536px;top:716px;width:19.5px;height:26px;background:#d9d9d9;border:1px solid #c8c8c8"></div>
<div style="left:2541.5px;top:723.2px;width:8.5px;height:1.7px;background:#505050"></div>
<div style="left:2541.5px;top:726.6px;width:8.5px;height:1.7px;background:#505050"></div>
<div style="left:2541.5px;top:730px;width:8.5px;height:1.7px;background:#505050"></div>
<svg style="position:absolute;left:2539px;top:747px" width="12" height="8"><polyline points="1,1.5 6,6.5 11,1.5" fill="none" stroke="#555" stroke-width="1.2"/></svg>
<div style="left:1271.6px;top:770px;width:2px;height:2px;background:#444"></div>
<div style="left:1275.6px;top:770px;width:2px;height:2px;background:#444"></div>
<div style="left:1279.6px;top:770px;width:2px;height:2px;background:#444"></div>
<div style="left:1283.6px;top:770px;width:2px;height:2px;background:#444"></div>
<div style="left:1287.6px;top:770px;width:2px;height:2px;background:#444"></div>
<div style="left:2px;top:779px;width:2556px;height:400px;background:#f4f4f4"></div>
<div style="left:10px;top:786px;width:73px;height:22px;background:#e9e9e9;border:1px solid #6a6a6a;box-shadow:inset 0 0 0 1px #fafafa"></div>
<div class="t" style="left:22px;top:791px;font-size:12px;color:#1e1e2e;letter-spacing:0px">D: (Disk)</div>
<div class="t" style="left:7.5px;top:822px;font-size:11px;color:#1e1e3a;letter-spacing:-0.374px;">Free Space</div>
<div class="t" style="left:2425.4px;top:822px;font-size:11px;color:#1e1e3a;letter-spacing:-0.101px;">Forecast Mode: Advanced</div>
<div style="left:8px;top:837.5px;width:2544px;height:342px;background:#fff;border:1px solid #a0a0a0;border-bottom:none"></div>
<div style="left:1px;top:28px;width:1.8px;height:1151px;background:#bcbcbc"></div>
<div style="left:2557px;top:28px;width:1.5px;height:1151px;background:#c0c0c0"></div>
<div class="t" style="left:0px;top:1105.4px;width:48.3px;text-align:right;font-size:12px;line-height:14px;color:#333;">0</div>
<div class="t" style="left:0px;top:1059.3px;width:48.3px;text-align:right;font-size:12px;line-height:14px;color:#333;letter-spacing:0.451px;">1,000</div>
<div class="t" style="left:0px;top:1013.1px;width:48.3px;text-align:right;font-size:12px;line-height:14px;color:#333;letter-spacing:0.451px;">2,000</div>
<div class="t" style="left:0px;top:967.0px;width:48.3px;text-align:right;font-size:12px;line-height:14px;color:#333;letter-spacing:0.451px;">3,000</div>
<div class="t" style="left:0px;top:920.8px;width:48.3px;text-align:right;font-size:12px;line-height:14px;color:#333;letter-spacing:0.451px;">4,000</div>
<div class="t" style="left:0px;top:874.7px;width:48.3px;text-align:right;font-size:12px;line-height:14px;color:#333;letter-spacing:0.451px;">5,000</div>
<div class="t" style="left:100.1px;top:1124px;font-size:12px;line-height:14px;color:#333;letter-spacing:0.669px;">5/31/2019</div>
<div class="t" style="left:305.8px;top:1124px;font-size:12px;line-height:14px;color:#333;letter-spacing:0.668px;">6/30/2019</div>
<div class="t" style="left:518.3px;top:1124px;font-size:12px;line-height:14px;color:#333;letter-spacing:0.668px;">7/31/2019</div>
<div class="t" style="left:730.8px;top:1124px;font-size:12px;line-height:14px;color:#333;letter-spacing:0.668px;">8/31/2019</div>
<div class="t" style="left:936.4px;top:1124px;font-size:12px;line-height:14px;color:#333;letter-spacing:0.668px;">9/30/2019</div>
<div class="t" style="left:1145.8px;top:1124px;font-size:12px;line-height:14px;color:#333;letter-spacing:0.549px;">10/31/2019</div>
<div class="t" style="left:1351.5px;top:1124px;font-size:12px;line-height:14px;color:#333;letter-spacing:0.649px;">11/30/2019</div>
<div class="t" style="left:1563.4px;top:1124px;font-size:12px;line-height:14px;color:#333;letter-spacing:0.667px;">12/31/2019</div>
<div class="t" style="left:1779.6px;top:1124px;font-size:12px;line-height:14px;color:#333;letter-spacing:0.668px;">1/31/2020</div>
<div class="t" style="left:1978.4px;top:1124px;font-size:12px;line-height:14px;color:#333;letter-spacing:0.668px;">2/29/2020</div>
<div class="t" style="left:2190.9px;top:1124px;font-size:12px;line-height:14px;color:#333;letter-spacing:0.668px;">3/31/2020</div>
<div class="t" style="left:2396.6px;top:1124px;font-size:12px;line-height:14px;color:#333;letter-spacing:0.668px;">4/30/2020</div>
<div style="left:1018px;top:1145.5px;width:523.5px;height:22.5px;border:1px solid #a8a8a8;background:#fff"></div>
<div class="t" style="left:1045.00px;top:1149.5px;font-size:12px;line-height:14px;color:#222;letter-spacing:0.341px;">Disk Free Space (MB)</div>
<div class="t" style="left:1201.00px;top:1149.5px;font-size:12px;line-height:14px;color:#222;letter-spacing:0.577px;">Prediction Interval: 70%</div>
<div class="t" style="left:1373.00px;top:1149.5px;font-size:12px;line-height:14px;color:#222;letter-spacing:0.310px;">Forecasted Free Space (MB)</div>
<svg style="position:absolute;left:0;top:0" width="2560" height="1179" viewBox="0 0 2560 1179">
<defs><pattern id="hp" patternUnits="userSpaceOnUse" width="7.5" height="7.5" patternTransform="rotate(45)"><rect width="7.5" height="7.5" fill="#fff"/><line x1="0" y1="0" x2="0" y2="7.5" stroke="#b8b8b8" stroke-width="1"/></pattern></defs>
<line x1="60.5" y1="1066.50" x2="2540.5" y2="1066.50" stroke="#dcdcdc" stroke-width="1"/>
<line x1="60.5" y1="1020.50" x2="2540.5" y2="1020.50" stroke="#dcdcdc" stroke-width="1"/>
<line x1="60.5" y1="974.50" x2="2540.5" y2="974.50" stroke="#dcdcdc" stroke-width="1"/>
<line x1="60.5" y1="928.50" x2="2540.5" y2="928.50" stroke="#dcdcdc" stroke-width="1"/>
<line x1="60.5" y1="882.50" x2="2540.5" y2="882.50" stroke="#dcdcdc" stroke-width="1"/>
<polygon points="1295.5,889.5 1305.3,861.5 1425,869 1760,848.5 2541,848.5 2541,995 1305.3,918.3 1295.5,889.5" fill="url(#hp)" fill-opacity="1" stroke="none"/>
<polyline points="1295.5,889.5 1305.3,861.5 1425,869 1760,848.5" fill="none" stroke="#8a8a8a" stroke-width="1"/>
<polyline points="1295.5,889.5 1305.3,918.3 2541,995" fill="none" stroke="#8a8a8a" stroke-width="1"/>
<line x1="2540.5" y1="848.5" x2="2540.5" y2="995" stroke="#8a8a8a" stroke-width="1"/>
<line x1="1296" y1="928.50" x2="2540.5" y2="928.50" stroke="#d0d0d0" stroke-width="1"/>
<line x1="1296" y1="882.50" x2="2540.5" y2="882.50" stroke="#d0d0d0" stroke-width="1"/>
<polyline points="60.5,874.10 87.5,874.10 98.8,872.90 108.8,874.10 118.8,874.00 130.0,872.50 145.0,874.60 155.0,874.10 163.8,872.50 170.0,872.75 178.8,874.10 192.5,872.50 210.0,874.10 223.8,874.10 238.8,872.50 251.2,874.10 260.0,873.75 266.2,875.00 272.5,873.10 288.8,874.10 307.5,872.75 322.5,872.90 341.2,874.60 351.2,872.75 367.5,872.90 380.0,874.60 401.2,874.60 410.5,873.70 417.2,874.90 425.2,873.00 433.1,873.10 445.1,874.60 473.0,874.60 484.9,873.50 492.9,874.60 512.8,874.90 520.8,873.40 539.4,873.00 546.0,873.10 554.0,874.60 565.9,874.60 575.2,873.70 581.9,874.70 588.5,873.70 595.1,874.70 609.7,873.00 621.7,874.60 640.3,874.60 649.6,873.40 657.6,874.60 666.9,874.50 677.5,873.00 685.4,874.90 698.7,873.40 706.7,874.60 712.3,875.00 719.3,879.60 726.4,896.40 732.8,896.40 741.0,895.20 746.9,895.70 753.9,897.00 772.7,898.00 780.9,901.30 787.3,902.30 794.9,894.10 802.0,889.00 810.2,889.40 820.7,889.30 828.9,888.20 835.9,886.40 841.8,888.10 855.9,889.40 864.1,888.80 871.1,888.80 882.8,889.60 893.4,889.40 903.9,887.90 910.9,889.00 923.8,889.60 932.0,887.90 948.4,888.10 957.8,889.60 971.9,887.90 986.0,889.40 1000.0,887.90 1012.9,889.60 1035.2,889.60 1049.2,887.70 1055.1,887.90 1063.3,890.00 1076.2,888.50 1089.1,888.10 1097.3,889.60 1111.3,889.40 1117.2,888.80 1124.2,889.90 1131.3,888.50 1144.1,889.60 1152.3,889.10 1164.1,889.10 1178.1,890.50 1186.3,889.60 1198.1,890.00 1206.3,888.10 1214.5,889.60 1227.4,889.90 1240.2,889.30 1247.3,888.10 1254.3,889.60 1261.3,888.10 1268.4,889.60 1275.4,888.50 1282.4,889.60 1289.5,888.30 1295.9,889.60" fill="none" stroke="#008080" stroke-width="2.1" stroke-linejoin="round"/>
<polyline points="1295.5,889.5 1330,890.6 2541,903" fill="none" stroke="#daa520" stroke-width="2"/>
<line x1="60.5" y1="848.5" x2="2540.5" y2="848.5" stroke="#a8a8a8" stroke-width="1"/>
<line x1="2540.5" y1="848.5" x2="2540.5" y2="1113.5" stroke="#a8a8a8" stroke-width="1"/>
<line x1="60.5" y1="848.5" x2="60.5" y2="1113.5" stroke="#a8a8a8" stroke-width="1"/>
<line x1="55" y1="1113.5" x2="2540.5" y2="1113.5" stroke="#a8a8a8" stroke-width="1"/>
<line x1="55" y1="1113.50" x2="60.5" y2="1113.50" stroke="#a0a0a0" stroke-width="1"/>
<line x1="58" y1="1097.50" x2="60.5" y2="1097.50" stroke="#a0a0a0" stroke-width="1"/>
<line x1="58" y1="1082.50" x2="60.5" y2="1082.50" stroke="#a0a0a0" stroke-width="1"/>
<line x1="55" y1="1066.50" x2="60.5" y2="1066.50" stroke="#a0a0a0" stroke-width="1"/>
<line x1="58" y1="1051.50" x2="60.5" y2="1051.50" stroke="#a0a0a0" stroke-width="1"/>
<line x1="58" y1="1036.50" x2="60.5" y2="1036.50" stroke="#a0a0a0" stroke-width="1"/>
<line x1="55" y1="1020.50" x2="60.5" y2="1020.50" stroke="#a0a0a0" stroke-width="1"/>
<line x1="58" y1="1005.50" x2="60.5" y2="1005.50" stroke="#a0a0a0" stroke-width="1"/>
<line x1="58" y1="989.50" x2="60.5" y2="989.50" stroke="#a0a0a0" stroke-width="1"/>
<line x1="55" y1="974.50" x2="60.5" y2="974.50" stroke="#a0a0a0" stroke-width="1"/>
<line x1="58" y1="959.50" x2="60.5" y2="959.50" stroke="#a0a0a0" stroke-width="1"/>
<line x1="58" y1="943.50" x2="60.5" y2="943.50" stroke="#a0a0a0" stroke-width="1"/>
<line x1="55" y1="928.50" x2="60.5" y2="928.50" stroke="#a0a0a0" stroke-width="1"/>
<line x1="58" y1="913.50" x2="60.5" y2="913.50" stroke="#a0a0a0" stroke-width="1"/>
<line x1="58" y1="897.50" x2="60.5" y2="897.50" stroke="#a0a0a0" stroke-width="1"/>
<line x1="55" y1="882.50" x2="60.5" y2="882.50" stroke="#a0a0a0" stroke-width="1"/>
<line x1="58" y1="866.50" x2="60.5" y2="866.50" stroke="#a0a0a0" stroke-width="1"/>
<line x1="58" y1="851.50" x2="60.5" y2="851.50" stroke="#a0a0a0" stroke-width="1"/>
</svg>
<svg style="position:absolute;left:0;top:0" width="2560" height="1179">
<line x1="129.5" y1="1113" x2="129.5" y2="1117.5" stroke="#a0a0a0" stroke-width="1"/>
<line x1="335.5" y1="1113" x2="335.5" y2="1117.5" stroke="#a0a0a0" stroke-width="1"/>
<line x1="547.5" y1="1113" x2="547.5" y2="1117.5" stroke="#a0a0a0" stroke-width="1"/>
<line x1="760.5" y1="1113" x2="760.5" y2="1117.5" stroke="#a0a0a0" stroke-width="1"/>
<line x1="965.5" y1="1113" x2="965.5" y2="1117.5" stroke="#a0a0a0" stroke-width="1"/>
<line x1="1178.5" y1="1113" x2="1178.5" y2="1117.5" stroke="#a0a0a0" stroke-width="1"/>
<line x1="1383.5" y1="1113" x2="1383.5" y2="1117.5" stroke="#a0a0a0" stroke-width="1"/>
<line x1="1596.5" y1="1113" x2="1596.5" y2="1117.5" stroke="#a0a0a0" stroke-width="1"/>
<line x1="1808.5" y1="1113" x2="1808.5" y2="1117.5" stroke="#a0a0a0" stroke-width="1"/>
<line x1="2007.5" y1="1113" x2="2007.5" y2="1117.5" stroke="#a0a0a0" stroke-width="1"/>
<line x1="2220.5" y1="1113" x2="2220.5" y2="1117.5" stroke="#a0a0a0" stroke-width="1"/>
<line x1="2425.5" y1="1113" x2="2425.5" y2="1117.5" stroke="#a0a0a0" stroke-width="1"/>
</svg>
<svg style="position:absolute;left:0;top:0" width="2560" height="1179">
<line x1="1021" y1="1156.5" x2="1042" y2="1156.5" stroke="#008080" stroke-width="1.5"/>
<polygon points="1178,1165 1187.5,1149.5 1197,1165 1192,1165 1187.5,1158 1183,1165" fill="#fff" stroke="#888" stroke-width="1"/>
<line x1="1349" y1="1156.5" x2="1370" y2="1156.5" stroke="#daa520" stroke-width="1.5"/>
</svg>
</body></html>
